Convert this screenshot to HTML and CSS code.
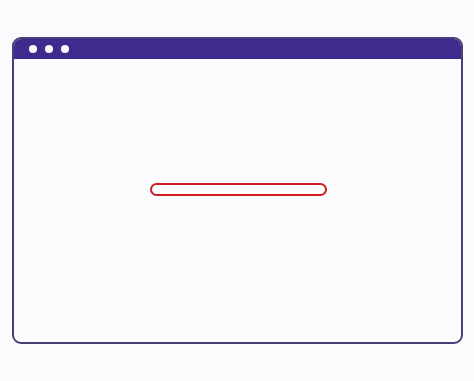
FILE: index.html
```html
<!DOCTYPE html>
<html>
<head>
<meta charset="utf-8">
<link rel="stylesheet" href="styles.css">
</head>
<body>
<div class="page">
  <div class="window">
    <div class="titlebar">
      <span class="dot"></span>
      <span class="dot"></span>
      <span class="dot"></span>
    </div>
    <div class="content">
      <div class="bar"></div>
    </div>
  </div>
</div>
</body>
</html>
```
FILE: styles.css
```css
html, body {
  margin: 0;
  padding: 0;
  background: #fbfafd;
  font-family: "Liberation Sans", Arial, sans-serif;
}
.page {
  width: 474px;
  height: 381px;
  padding: 37px 11px 0 12px;
  box-sizing: border-box;
}
.window {
  width: 451px;
  height: 307px;
  box-sizing: border-box;
  border: 2px solid #4a3f78;
  border-radius: 9px;
  overflow: hidden;
  display: flex;
  flex-direction: column;
  background: #fcfbfe;
}
.titlebar {
  height: 20px;
  background: #3f2a8e;
  display: flex;
  align-items: center;
  gap: 8px;
  padding-left: 15px;
  flex-shrink: 0;
}
.dot {
  width: 8px;
  height: 8px;
  border-radius: 50%;
  background: #ffffff;
}
.content {
  flex: 1;
  display: flex;
  justify-content: center;
  padding-top: 124px;
  padding-left: 2px;
}
.bar {
  width: 177px;
  height: 13px;
  box-sizing: border-box;
  border: 2px solid #cc1f24;
  border-radius: 7px;
  background: #ffffff;
}
```
